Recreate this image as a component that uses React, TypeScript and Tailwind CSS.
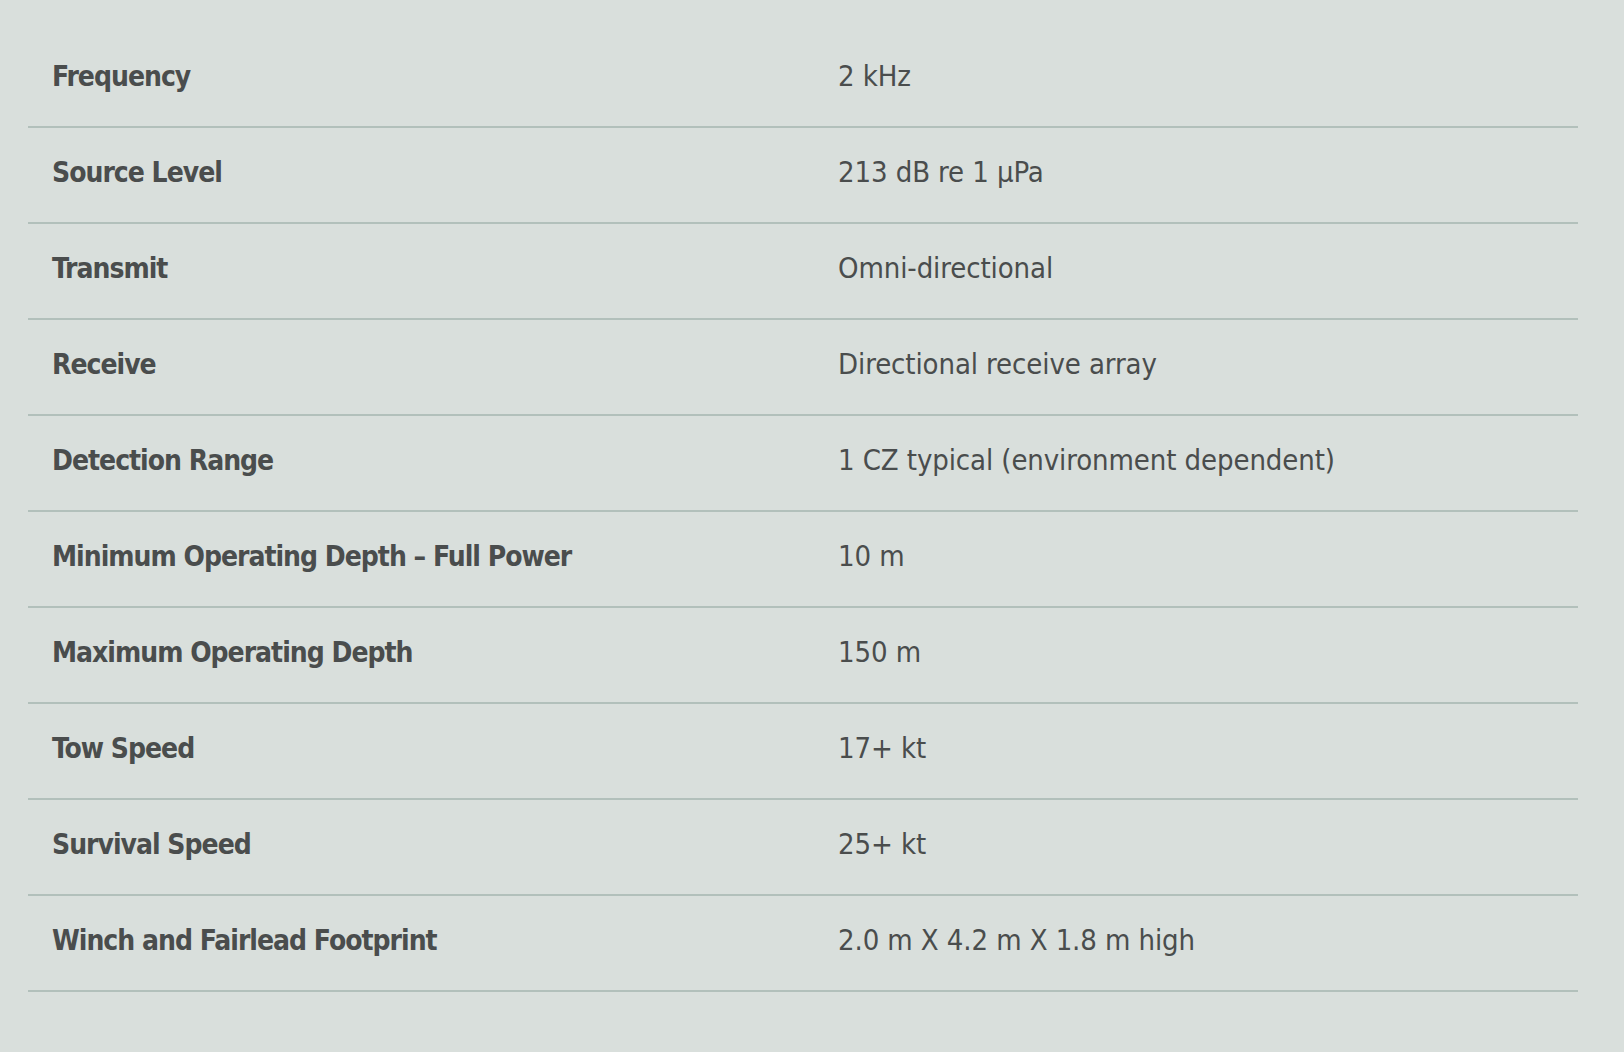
const specs = [
  { label: "Frequency", value: "2 kHz" },
  { label: "Source Level", value: "213 dB re 1 µPa" },
  { label: "Transmit", value: "Omni-directional" },
  { label: "Receive", value: "Directional receive array" },
  { label: "Detection Range", value: "1 CZ typical (environment dependent)" },
  { label: "Minimum Operating Depth – Full Power", value: "10 m" },
  { label: "Maximum Operating Depth", value: "150 m" },
  { label: "Tow Speed", value: "17+ kt" },
  { label: "Survival Speed", value: "25+ kt" },
  { label: "Winch and Fairlead Footprint", value: "2.0 m X 4.2 m X 1.8 m high" },
];

export default function App() {
  return (
    <div className="min-h-[1052px] w-full bg-[#d9dfdc] pt-[32px]">
      <div className="ml-[28px] w-[1550px]">
        {specs.map((row) => (
          <div
            key={row.label}
            className="grid h-[96px] grid-cols-[786px_1fr] items-center border-b-2 border-[#b2c0bb] pb-[4px] pl-[24px] text-[#4a4d4d]"
          >
            <div className="font-['DejaVu_Sans_Condensed','DejaVu_Sans',sans-serif] text-[28px] font-bold tracking-[-1px]">
              {row.label}
            </div>
            <div className="font-['DejaVu_Sans_Condensed','DejaVu_Sans',sans-serif] text-[29px] tracking-[-0.1px]">
              {row.value}
            </div>
          </div>
        ))}
      </div>
    </div>
  );
}
